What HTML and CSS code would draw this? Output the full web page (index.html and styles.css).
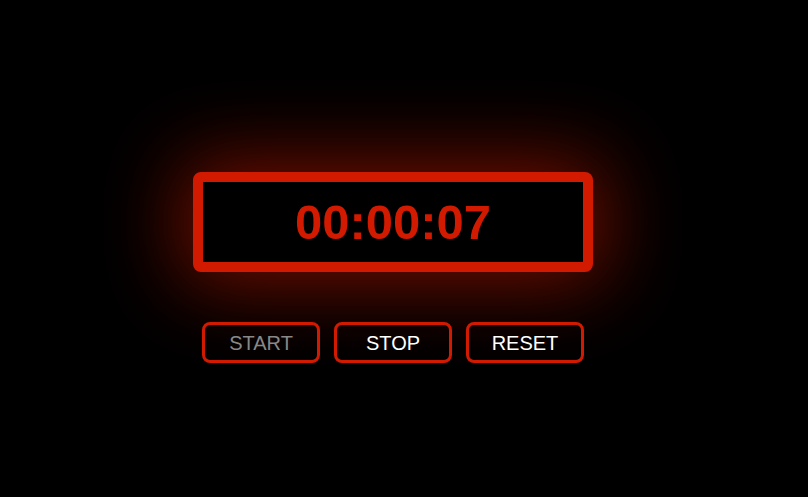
FILE: index.html
```html
<!DOCTYPE html>
<html>
<head>
<meta charset="utf-8">
<link rel="stylesheet" href="styles.css">
</head>
<body>
<main class="stage">
  <div class="display">00:00:07</div>
  <div class="controls">
    <button class="btn disabled">START</button>
    <button class="btn">STOP</button>
    <button class="btn">RESET</button>
  </div>
</main>
</body>
</html>
```
FILE: styles.css
```css
html, body {
  margin: 0;
  padding: 0;
  background: #000;
  height: 100%;
}
.stage {
  width: 786px;
  height: 497px;
  display: flex;
  flex-direction: column;
  align-items: center;
  padding-top: 172px;
  box-sizing: border-box;
  font-family: "Liberation Sans", Arial, sans-serif;
}
.display {
  width: 400px;
  height: 100px;
  box-sizing: border-box;
  border: 10px solid #d21a00;
  border-radius: 8px;
  background: #000;
  box-shadow: 0 0 80px 12px rgba(210, 26, 0, 0.55);
  color: #d21a00;
  font-weight: bold;
  font-size: 49px;
  display: flex;
  align-items: center;
  justify-content: center;
}
.controls {
  display: flex;
  gap: 14px;
  margin-top: 50px;
}
.btn {
  width: 118px;
  height: 41px;
  box-sizing: border-box;
  border: 3px solid #d21a00;
  border-radius: 8px;
  background: transparent;
  color: #fff;
  font-family: "Liberation Sans", Arial, sans-serif;
  font-size: 20px;
  padding: 2px 0 0;
}
.btn.disabled {
  color: #888;
}
```
